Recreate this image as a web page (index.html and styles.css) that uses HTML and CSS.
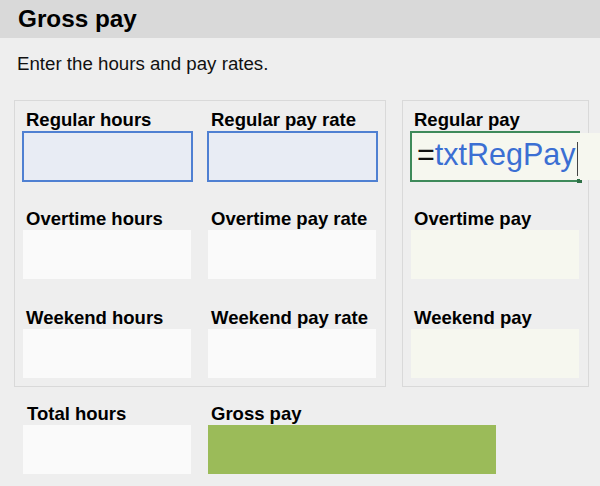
FILE: index.html
```html
<!DOCTYPE html>
<html lang="en">
<head>
<meta charset="utf-8">
<title>Gross pay</title>
<link rel="stylesheet" href="styles.css">
</head>
<body>
<header class="titlebar"><h1 class="title">Gross pay</h1></header>
<p class="intro">Enter the hours and pay rates.</p>
<div class="groups">
  <section class="group group-inputs">
    <div class="cell"><div class="lbl">Regular hours</div><div class="field field-focus"></div></div>
    <div class="cell"><div class="lbl">Regular pay rate</div><div class="field field-focus"></div></div>
    <div class="cell"><div class="lbl">Overtime hours</div><div class="field"></div></div>
    <div class="cell"><div class="lbl">Overtime pay rate</div><div class="field"></div></div>
    <div class="cell"><div class="lbl">Weekend hours</div><div class="field"></div></div>
    <div class="cell"><div class="lbl">Weekend pay rate</div><div class="field"></div></div>
  </section>
  <section class="group group-results">
    <div class="cell"><div class="lbl">Regular pay</div><div class="field field-edit"><span class="eq">=</span><span class="ref">txtRegPay</span><span class="caret"></span></div></div>
    <div class="cell"><div class="lbl">Overtime pay</div><div class="field field-calc"></div></div>
    <div class="cell"><div class="lbl">Weekend pay</div><div class="field field-calc"></div></div>
  </section>
</div>
<div class="totals">
  <div class="cell cell-total"><div class="lbl">Total hours</div><div class="field"></div></div>
  <div class="cell cell-gross"><div class="lbl">Gross pay</div><div class="field field-gross"></div></div>
</div>
</body>
</html>
```
FILE: styles.css
```css
html, body {
  margin: 0;
  padding: 0;
}
body {
  width: 600px;
  height: 486px;
  overflow: hidden;
  background: #eeeeee;
  font-family: "Liberation Sans", Arial, sans-serif;
  color: #000;
}
.titlebar {
  height: 38px;
  background: #d9d9d9;
  padding-left: 18px;
  box-sizing: border-box;
}
.title {
  margin: 0;
  font-size: 24.3px;
  font-weight: bold;
  line-height: 37px;
}
.intro {
  margin: 16px 0 0 0;
  padding-left: 17px;
  font-size: 18.7px;
  line-height: 20px;
  color: #111;
}
.groups {
  display: flex;
  align-items: stretch;
  gap: 16px;
  margin-top: 26px;
  padding-left: 14px;
}
.group {
  border: 1px solid #d9d9d9;
  padding: 9px 9px 8px 8px;
  display: grid;
  grid-template-rows: 99px 99px 70px;
  align-items: start;
}
.group-inputs {
  grid-template-columns: 168px 168px;
  column-gap: 17px;
}
.group-results {
  grid-template-columns: 168px;
}
.cell {
  display: flex;
  flex-direction: column;
}
.lbl {
  font-size: 18.5px;
  font-weight: bold;
  line-height: 20px;
  height: 20px;
  margin-bottom: 1px;
  padding-left: 3px;
  white-space: nowrap;
}
.field {
  height: 49px;
  background: #fafafa;
  box-sizing: border-box;
}
.field-focus {
  width: 171px;
  height: 51px;
  margin-left: -1px;
  border: 2px solid #4f80d2;
  background: #e8ecf4;
}
.field-calc {
  background: #f6f7ef;
}
.field-edit {
  position: relative;
  width: 170px;
  height: 51px;
  margin-left: -1px;
  border: 2px solid #3e8a5a;
  border-right: 0;
  background: #f6f7ef;
  padding: 4px 0 0 5px;
  font-size: 30.5px;
  line-height: 34px;
  white-space: nowrap;
}
.field-edit::after {
  content: "";
  position: absolute;
  left: 100%;
  top: 0;
  bottom: 0;
  width: 22px;
  background: #f6f7ef;
}
.field-edit::before {
  content: "";
  position: absolute;
  right: -2px;
  bottom: -3px;
  width: 5px;
  height: 4px;
  background: #2f7047;
}
.eq {
  color: #111;
}
.ref {
  color: #3b6fd3;
}
.caret {
  display: inline-block;
  width: 1px;
  height: 34px;
  background: #444;
  vertical-align: -11px;
  margin-left: 1px;
}
.totals {
  display: flex;
  gap: 17px;
  margin-top: 17px;
  padding-left: 23px;
}
.cell-total {
  width: 168px;
}
.cell-gross {
  width: 288px;
}
.cell-total .lbl {
  padding-left: 4px;
}
.field-gross {
  background: #9bbb59;
}
```
